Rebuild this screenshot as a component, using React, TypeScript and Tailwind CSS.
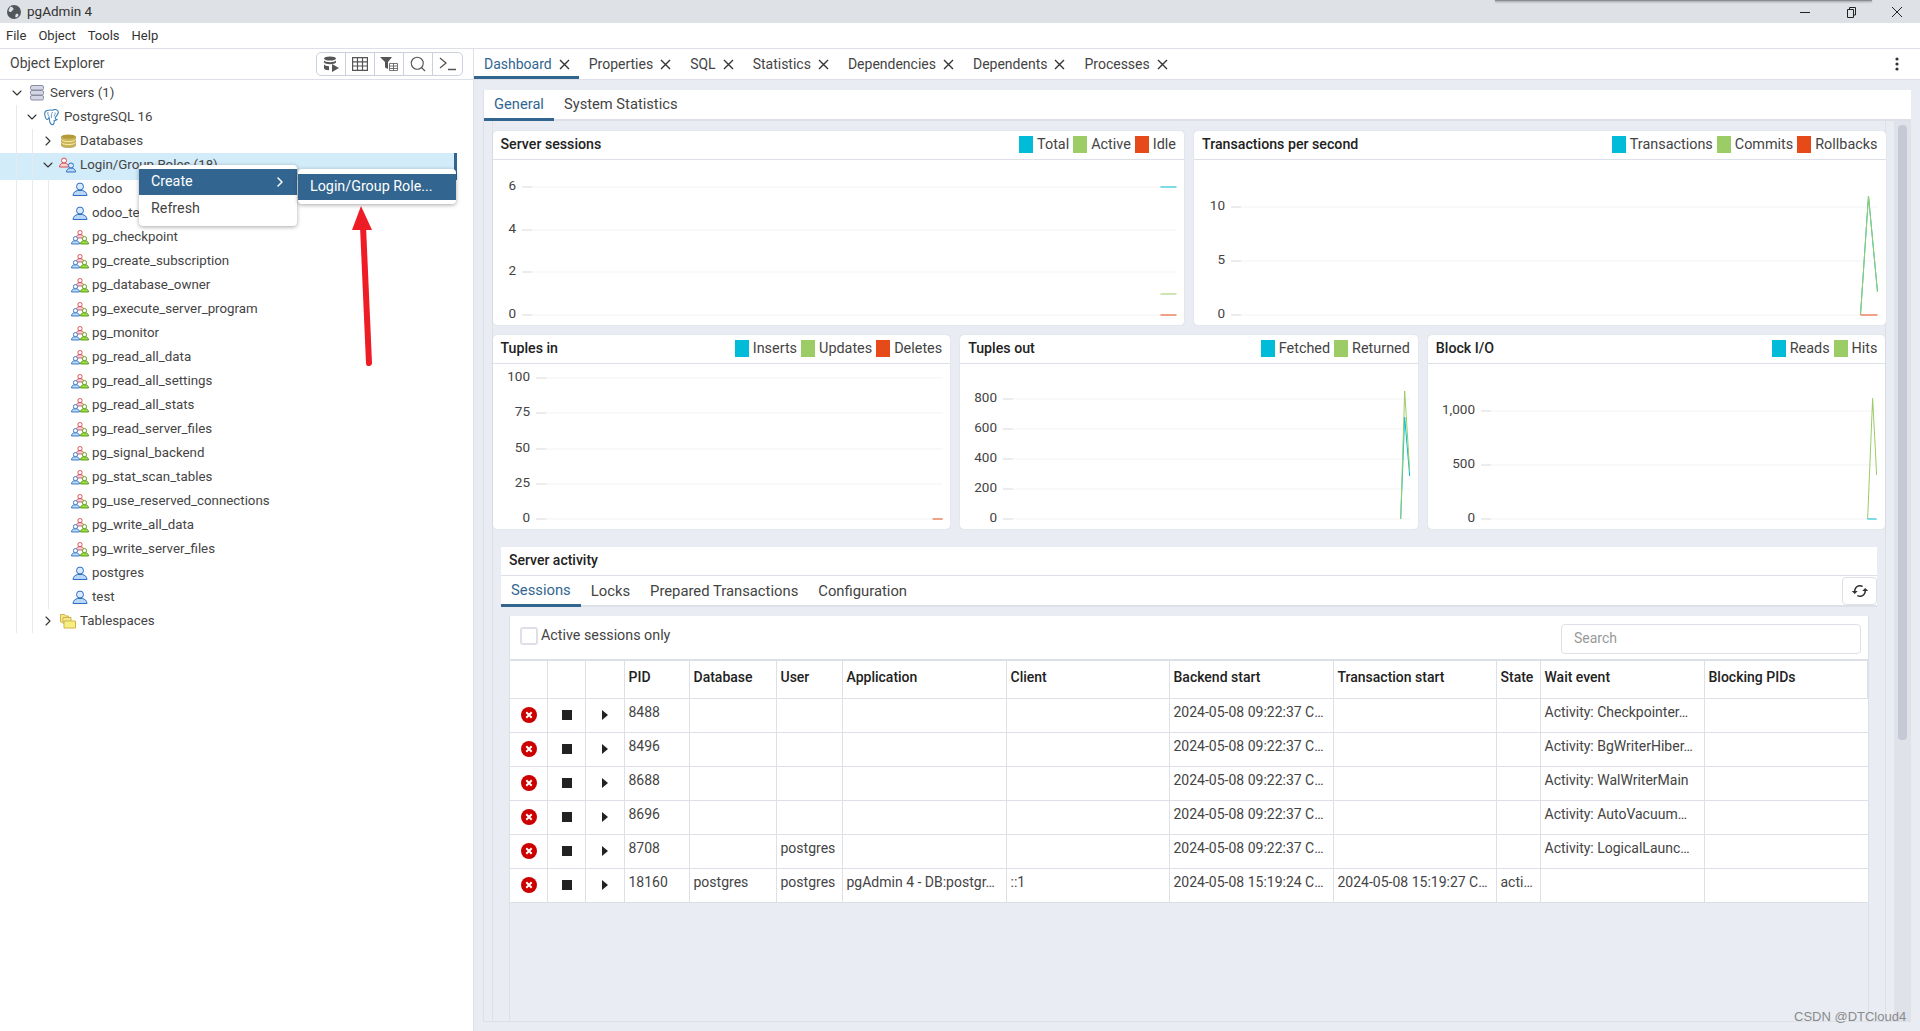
import { ChevronDown, ChevronRight, Search } from 'lucide-react';
import { MdCached } from 'react-icons/md';

const TEAL = '#00bcd8';
const GREEN = '#9ccc65';
const RED = '#e64a19';

const UserIcon = () => (
  <svg width="16" height="16" viewBox="0 0 16 16">
    <path d="M1 14.5c0-3 2.5-4.5 4.5-5h5c2 .5 4.500 2 4.500 5z" fill="#b9d7f5" stroke="#2b6fc4" strokeWidth="1" />
    <circle cx="8" cy="5.500" r="3.500" fill="#d8e9fa" stroke="#2b6fc4" strokeWidth="1" />
  </svg>
);

const Person = ({ x, y, fill, stroke }: { x: number; y: number; fill: string; stroke: string }) => (
  <g transform={`translate(${x} ${y})`}>
    <path d="M0 8c0-2 1.500-3 3-3.300h2c1.500.3 3 1.300 3 3.300z" fill={fill} stroke={stroke} strokeWidth="0.9" />
    <circle cx="4" cy="2.600" r="2.100" fill="#ffffff" stroke={stroke} strokeWidth="0.9" />
  </g>
);

const GroupIcon = () => (
  <svg width="18" height="16" viewBox="0 0 18 16">
    <Person x={5} y={1} fill="#f8d7d7" stroke="#d9474f" />
    <Person x={0.500} y={7} fill="#b9d7f5" stroke="#2b6fc4" />
    <Person x={9.500} y={7} fill="#a5d64c" stroke="#4e9a06" />
  </svg>
);

const LoginRolesIcon = () => (
  <svg width="18" height="16" viewBox="0 0 18 16">
    <g transform="translate(0 0)">
      <path d="M.500 10c0-2.500 1.800-3.500 3.500-4h2c1.700.5 3.500 1.500 3.500 4z" fill="#f8d7d7" stroke="#d9474f" />
      <circle cx="5" cy="3.500" r="2.500" fill="#fff" stroke="#d9474f" />
    </g>
    <g transform="translate(7 5)">
      <path d="M.500 10c0-2.500 1.800-3.500 3.500-4h2c1.700.5 3.500 1.500 3.500 4z" fill="#b9d7f5" stroke="#2b6fc4" />
      <circle cx="5" cy="3.500" r="2.500" fill="#d8e9fa" stroke="#2b6fc4" />
    </g>
  </svg>
);

const ServersIcon = () => (
  <svg width="14" height="16" viewBox="0 0 14 16">
    {[0.500, 5.500, 10.500].map((y) => (
      <rect key={y} x="0.500" y={y} width="13" height="4.500" rx="1.500" fill="#d5d6e4" stroke="#8b8ca3" />
    ))}
  </svg>
);

const ElephantIcon = () => (
  <svg width="17" height="17" viewBox="0 0 17 17">
    <path
      d="M3 1.500C1 2 .5 4 .8 6c.3 2 1 4 2.200 4.500 1 .3 1.500-1 2-2 .5 1.500.5 3.500 1 5 .5 1.500 2 2.500 3.200 2 1.200-.5 1-2.500 1-4 1.500 0 2.300-.3 2.800-1-1 0-1.800-.5-1.800-1.500 0-1 2.500-3 3-5 .4-2-1-3.500-3-3.500-1 0-2 .3-2.700.7C7.500 1 5 1 3 1.500z"
      fill="#ffffff"
      stroke="#3d7fb8"
      strokeWidth="1.100"
    />
    <path d="M4 3c-.5 1.500 0 3 1 4.500M8.500 3c-1 1.500-1.500 3.500-1 6M11 3.500c.5 1.500-.5 3-1 4" fill="none" stroke="#3d7fb8" strokeWidth="0.800" />
  </svg>
);

const DatabasesIcon = () => (
  <svg width="15" height="14" viewBox="0 0 15 14">
    <path d="M.500 2.500v9c0 1.100 3 2 7 2s7-.9 7-2v-9z" fill="#c9b458" stroke="#9a8a3c" strokeWidth="0.600" />
    <ellipse cx="7.500" cy="2.500" rx="7" ry="2" fill="#b59a3a" />
    <path d="M.500 5.500c0 1.100 3 2 7 2s7-.9 7-2M.500 8.500c0 1.100 3 2 7 2s7-.9 7-2" fill="none" stroke="#fff3b0" strokeWidth="1" />
  </svg>
);

const TablespacesIcon = () => (
  <svg width="16" height="16" viewBox="0 0 16 16">
    <path d="M.500 1.500h4l1 1.500h3v6h-8z" fill="#f5e98a" stroke="#d3b24a" />
    <path d="M3 4.500h8v6H3z" fill="#f5e98a" stroke="#d3b24a" />
    <path d="M4 8h11.500v7H4z" fill="#f5ee80" stroke="#d3b24a" />
  </svg>
);

type RowKind = 'user' | 'group';

const ROLES: [string, RowKind][] = [
  ['odoo', 'user'],
  ['odoo_test', 'user'],
  ['pg_checkpoint', 'group'],
  ['pg_create_subscription', 'group'],
  ['pg_database_owner', 'group'],
  ['pg_execute_server_program', 'group'],
  ['pg_monitor', 'group'],
  ['pg_read_all_data', 'group'],
  ['pg_read_all_settings', 'group'],
  ['pg_read_all_stats', 'group'],
  ['pg_read_server_files', 'group'],
  ['pg_signal_backend', 'group'],
  ['pg_stat_scan_tables', 'group'],
  ['pg_use_reserved_connections', 'group'],
  ['pg_write_all_data', 'group'],
  ['pg_write_server_files', 'group'],
  ['postgres', 'user'],
  ['test', 'user'],
];

const Guides = ({ depth }: { depth: number }) => (
  <>
    {Array.from({ length: depth }).map((_, i) => (
      <span key={i} className="w-[16px] h-full shrink-0 border-r border-[#e6e9ef]" />
    ))}
  </>
);

const Branch = ({
  depth,
  open,
  icon,
  label,
}: {
  depth: number;
  open: boolean;
  icon: React.ReactNode;
  label: string;
}) => (
  <div className="flex items-center h-[24px] pl-[1px]">
    <Guides depth={depth} />
    <span className={depth === 0 ? 'w-[8px] shrink-0' : 'w-[7px] shrink-0'} />
    {open ? (
      <ChevronDown size={16} strokeWidth={1.600} className="shrink-0 text-[#333]" />
    ) : (
      <ChevronRight size={16} strokeWidth={1.600} className="shrink-0 text-[#333]" />
    )}
    <span className="w-[20px] ml-[2px] shrink-0 flex items-center justify-center">{icon}</span>
    <span className={`text-[13.300px] text-[#444] ${depth === 0 ? 'ml-[3px]' : 'ml-[2px]'}`}>{label}</span>
  </div>
);

const RoleRow = ({ name, kind }: { name: string; kind: RowKind }) => (
  <div className="flex items-center h-[24px] pl-[1px]">
    <Guides depth={3} />
    <span className="w-[22px] shrink-0" />
    <span className="w-[18px] shrink-0 flex items-center justify-center">
      {kind === 'user' ? <UserIcon /> : <GroupIcon />}
    </span>
    <span className="ml-[3px] text-[13.300px] text-[#444]">{name}</span>
  </div>
);

const ToolButton = ({ children, last }: { children: React.ReactNode; last?: boolean }) => (
  <span className={`w-[29px] h-full flex items-center justify-center text-[#555] ${last ? '' : 'border-r border-[#c9d2dc]'}`}>
    {children}
  </span>
);

const ObjectExplorer = () => (
  <aside className="w-[473px] shrink-0 bg-white">
    <div className="h-[31px] border-b border-[#dde0e6] flex items-center justify-between pl-[10px] pr-[10px]">
      <span className="text-[#444] -mt-[2px]">Object Explorer</span>
      <div className="h-[24px] flex border border-[#c9d2dc] rounded-[5px]">
        <ToolButton>
          <svg width="16" height="16" viewBox="0 0 16 16" fill="#555">
            <ellipse cx="7" cy="2.500" rx="6" ry="2" />
            <path d="M1 4.500c1 1.300 3 1.700 6 1.700s5-.4 6-1.700v2c-1 1.300-3 1.700-6 1.700s-5-.4-6-1.700zM1 8.500c1 1.300 3 1.700 5 1.700v4c-3 0-5-.7-5-2zM9 8l7 4-7 4z" />
          </svg>
        </ToolButton>
        <ToolButton>
          <svg width="16" height="14" viewBox="0 0 16 14" fill="none" stroke="#555" strokeWidth="1.200">
            <path d="M.600.600h14.800v12.800H.600zM.600 4.800h14.800M.600 9h14.800M5.500.600v12.800M10.500.600v12.800" />
          </svg>
        </ToolButton>
        <ToolButton>
          <svg width="18" height="14" viewBox="0 0 18 14">
            <path d="M0 0h12L8 5v7l-3-1.500V5z" fill="#555" />
            <path d="M9.500 6.500h8v7h-8zM9.500 9h8M9.500 11.500h8M13.500 6.500v7" fill="#fff" stroke="#555" strokeWidth="0.800" />
          </svg>
        </ToolButton>
        <ToolButton>
          <Search size={18} strokeWidth={1.500} />
        </ToolButton>
        <ToolButton last>
          <svg width="18" height="14" viewBox="0 0 18 14" fill="none" stroke="#555" strokeWidth="1.300">
            <path d="M1 1l6 5-6 5M9 12.500h8" />
          </svg>
        </ToolButton>
      </div>
    </div>
    <div className="relative pt-[1px]">
      <Branch depth={0} open icon={<ServersIcon />} label="Servers (1)" />
      <Branch depth={1} open icon={<ElephantIcon />} label="PostgreSQL 16" />
      <Branch depth={2} open={false} icon={<DatabasesIcon />} label="Databases" />
      <div className="w-[457px] h-[27px] -mb-[3px] bg-[#d3ecfa] border-r-[3px] border-[#326690]">
        <Branch depth={2} open icon={<LoginRolesIcon />} label="Login/Group Roles (18)" />
      </div>
      {ROLES.map(([name, kind]) => (
        <RoleRow key={name} name={name} kind={kind} />
      ))}
      <Branch depth={2} open={false} icon={<TablespacesIcon />} label="Tablespaces" />

      {/* context menu */}
      <div className="absolute left-[139px] top-[85px] w-[158px] h-[61px] pt-[4px] bg-white rounded-[4px] shadow-[0_1px_4px_rgba(0,0,0,0.35)] text-[14.300px]">
        <div className="h-[26px] px-[12px] pb-[1px] bg-[#326690] text-white flex items-center justify-between">
          <span>Create</span>
          <ChevronRight size={16} strokeWidth={2.200} className="-mr-[3px]" />
        </div>
        <div className="h-[27px] px-[12px] flex items-center text-[#444]">Refresh</div>
      </div>
      <div className="absolute left-[298px] top-[89px] w-[158px] h-[35px] pt-[5px] bg-white rounded-[4px] shadow-[0_1px_4px_rgba(0,0,0,0.35)] text-[14.300px]">
        <div className="h-[26px] px-[12px] pb-[1px] bg-[#326690] text-white flex items-center">Login/Group Role...</div>
      </div>
    </div>
  </aside>
);

const CloseX = () => (
  <svg width="11" height="11" viewBox="0 0 11 11" fill="none" stroke="#333" strokeWidth="1.400" className="ml-[7px] mr-[9px]">
    <path d="M1 1l9 9M10 1l-9 9" />
  </svg>
);

const TABS = ['Dashboard', 'Properties', 'SQL', 'Statistics', 'Dependencies', 'Dependents', 'Processes'];

const MainTabs = () => (
  <div className="h-[31px] bg-white border-b border-[#dde0e6] flex justify-between items-stretch shrink-0">
    <div className="flex">
      {TABS.map((t, i) => (
        <div
          key={t}
          className={`flex items-center pl-[10px] ${i === 0 ? 'text-[#326690] border-b-[3px] border-[#326690] pt-[3px]' : 'text-[#444]'}`}
        >
          {t}
          <CloseX />
        </div>
      ))}
    </div>
    <svg width="4" height="14" viewBox="0 0 4 14" fill="#333" className="self-center mr-[21px]">
      <circle cx="2" cy="2" r="1.600" />
      <circle cx="2" cy="7" r="1.600" />
      <circle cx="2" cy="12" r="1.600" />
    </svg>
  </div>
);

type Tick = { label: string; y: number };
type Series = { color: string; points: string };

// coordinates in the viewBox are page pixels, box = [x, y, w, h] of the card body
const Chart = ({
  box,
  ticks,
  tickX,
  gridEnd,
  series,
}: {
  box: [number, number, number, number];
  ticks: Tick[];
  tickX: number;
  gridEnd: number;
  series: Series[];
}) => (
  <svg width="100%" className="flex-1 min-h-0" viewBox={box.join(' ')} preserveAspectRatio="none">
    {ticks.map((t) => (
      <g key={t.label}>
        <line x1={tickX} x2={tickX + 10} y1={t.y} y2={t.y} stroke="#e6e6e6" strokeWidth="1.500" />
        <line x1={tickX + 10} x2={gridEnd} y1={t.y} y2={t.y} stroke="#f3f3f3" strokeWidth="1" />
        <text x={tickX - 6} y={t.y + 3} textAnchor="end" fontSize="13.500" fill="#444" fontFamily="Roboto, sans-serif">
          {t.label}
        </text>
      </g>
    ))}
    {series.map((s, i) => (
      <polyline key={i} points={s.points} fill="none" stroke={s.color} strokeWidth="1" />
    ))}
  </svg>
);

const ChartCard = ({
  title,
  legend,
  children,
}: {
  title: string;
  legend: [string, string][];
  children: React.ReactNode;
}) => (
  <div className="h-[194px] bg-white rounded-[4px] flex flex-col shadow-[0_0_1px_rgba(0,0,0,0.2)] min-w-0">
    <div className="h-[29px] shrink-0 border-b border-[#dde0e6] flex items-center justify-between pl-[8px] pr-[8px]">
      <span className="font-medium text-[14.200px] text-[#222] -mt-[1px]">{title}</span>
      <div className="flex items-center gap-[4px]">
        {legend.map(([label, color]) => (
          <div key={label} className="flex items-center gap-[4px]">
            <span className="w-[14px] h-[17px]" style={{ background: color }} />
            <span className="text-[14.400px] text-[#444] -mt-[1px]">{label}</span>
          </div>
        ))}
      </div>
    </div>
    {children}
  </div>
);

const Charts = () => (
  <>
    <div className="grid grid-cols-2 gap-[10px]">
      <ChartCard title="Server sessions" legend={[['Total', TEAL], ['Active', GREEN], ['Idle', RED]]}>
        <Chart
          box={[493, 160, 691, 165]}
          ticks={[{ label: '6', y: 187 }, { label: '4', y: 230 }, { label: '2', y: 272 }, { label: '0', y: 315 }]}
          tickX={522}
          gridEnd={1176}
          series={[
            { color: TEAL, points: '1160,187 1176,187' },
            { color: GREEN, points: '1160,294 1176,294' },
            { color: RED, points: '1160,315 1176,315' },
          ]}
        />
      </ChartCard>
      <ChartCard title="Transactions per second" legend={[['Transactions', TEAL], ['Commits', GREEN], ['Rollbacks', RED]]}>
        <Chart
          box={[1194, 160, 691, 165]}
          ticks={[{ label: '10', y: 207 }, { label: '5', y: 261 }, { label: '0', y: 315 }]}
          tickX={1231}
          gridEnd={1877}
          series={[
            { color: TEAL, points: '1860,315 1868,196 1877,292' },
            { color: GREEN, points: '1860,315 1868,196 1877,292' },
            { color: RED, points: '1860,315 1877,315' },
          ]}
        />
      </ChartCard>
    </div>
    <div className="grid grid-cols-3 gap-[10px] mt-[10px]">
      <ChartCard title="Tuples in" legend={[['Inserts', TEAL], ['Updates', GREEN], ['Deletes', RED]]}>
        <Chart
          box={[493, 364, 457, 165]}
          ticks={[{ label: '100', y: 378 }, { label: '75', y: 413 }, { label: '50', y: 449 }, { label: '25', y: 484 }, { label: '0', y: 519 }]}
          tickX={536}
          gridEnd={942}
          series={[{ color: RED, points: '932,519 942,519' }]}
        />
      </ChartCard>
      <ChartCard title="Tuples out" legend={[['Fetched', TEAL], ['Returned', GREEN]]}>
        <Chart
          box={[960, 364, 458, 165]}
          ticks={[{ label: '800', y: 399 }, { label: '600', y: 429 }, { label: '400', y: 459 }, { label: '200', y: 489 }, { label: '0', y: 519 }]}
          tickX={1003}
          gridEnd={1410}
          series={[
            { color: TEAL, points: '1401,519 1405,417 1410,476' },
            { color: GREEN, points: '1401,519 1405,391 1410,470' },
          ]}
        />
      </ChartCard>
      <ChartCard title="Block I/O" legend={[['Reads', TEAL], ['Hits', GREEN]]}>
        <Chart
          box={[1428, 364, 457, 165]}
          ticks={[{ label: '1,000', y: 411 }, { label: '500', y: 465 }, { label: '0', y: 519 }]}
          tickX={1481}
          gridEnd={1876}
          series={[
            { color: GREEN, points: '1867,519 1872,398 1876,475' },
            { color: TEAL, points: '1867,519 1876,519' },
          ]}
        />
      </ChartCard>
    </div>
  </>
);

const HEADERS = ['', '', '', 'PID', 'Database', 'User', 'Application', 'Client', 'Backend start', 'Transaction start', 'State', 'Wait event', 'Blocking PIDs'];

const SESSIONS = [
  ['8488', '', '', '', '', '2024-05-08 09:22:37 C…', '', '', 'Activity: Checkpointer…'],
  ['8496', '', '', '', '', '2024-05-08 09:22:37 C…', '', '', 'Activity: BgWriterHiber…'],
  ['8688', '', '', '', '', '2024-05-08 09:22:37 C…', '', '', 'Activity: WalWriterMain'],
  ['8696', '', '', '', '', '2024-05-08 09:22:37 C…', '', '', 'Activity: AutoVacuum…'],
  ['8708', '', 'postgres', '', '', '2024-05-08 09:22:37 C…', '', '', 'Activity: LogicalLaunc…'],
  ['18160', 'postgres', 'postgres', 'pgAdmin 4 - DB:postgr…', '::1', '2024-05-08 15:19:24 C…', '2024-05-08 15:19:27 C…', 'acti…', ''],
];

const GRID = 'grid grid-cols-[38px_38px_39px_65px_87px_66px_164px_163px_164px_163px_44px_164px_163px]';

const ActionCell = ({ children }: { children: React.ReactNode }) => (
  <div className="border-r border-b border-[#dde0e6] flex items-center justify-center pb-[1px]">{children}</div>
);

const SessionsTable = () => (
  <div className="bg-white border-t-2 border-[#dde0e6] w-[1358px]">
    <div className={`${GRID} h-[38px]`}>
      {HEADERS.map((h, i) => (
        <div key={i} className="border-r border-b border-[#dde0e6] pl-[3.500px] pt-[6px] font-medium text-[#222] whitespace-nowrap">
          {h}
        </div>
      ))}
    </div>
    {SESSIONS.map((row) => (
      <div key={row[0]} className={`${GRID} h-[34px]`}>
        <ActionCell>
          <svg width="16" height="16" viewBox="0 0 16 16">
            <circle cx="8" cy="8" r="8" fill="#cc0000" />
            <path d="M5.300 5.300l5.400 5.400M10.700 5.300l-5.400 5.400" stroke="#fff" strokeWidth="2" />
          </svg>
        </ActionCell>
        <ActionCell>
          <span className="w-[10px] h-[10px] bg-[#222]" />
        </ActionCell>
        <ActionCell>
          <svg width="6" height="10" viewBox="0 0 6 10" fill="#222">
            <path d="M0 0l6 5-6 5z" />
          </svg>
        </ActionCell>
        {row.map((c, i) => (
          <div key={i} className="border-r border-b border-[#dde0e6] pl-[3.500px] pt-[3px] text-[#444] whitespace-nowrap">
            {c}
          </div>
        ))}
        <div className="border-b border-[#dde0e6]" />
      </div>
    ))}
  </div>
);

const ServerActivity = () => (
  <div className="mt-[18px] mx-[8px] flex-1 flex flex-col min-h-0">
    <div className="bg-white h-[29px] shrink-0 border-b border-[#dde0e6] pl-[8px] pb-[1px] flex items-center font-medium text-[#222]">Server activity</div>
    <div className="bg-white h-[31px] shrink-0 border-b-2 border-[#dde0e6] flex justify-between">
      <div className="flex text-[14.800px]">
        {['Sessions', 'Locks', 'Prepared Transactions', 'Configuration'].map((t, i) => (
          <div
            key={t}
            className={`px-[10px] flex items-center -mb-[2px] ${i === 0 ? 'text-[#326690] border-b-[3px] border-[#326690]' : 'text-[#444]'}`}
          >
            {t}
          </div>
        ))}
      </div>
      <span className="w-[35px] h-[28px] mt-[1px] border border-[#dde0e6] rounded-[4px] flex items-center justify-center text-[#333]">
        <MdCached size={18} />
      </span>
    </div>
    <div className="mt-[9px] mx-[8px] flex-1 flex flex-col border-x border-[#dde0e6] min-h-0">
      <div className="bg-white h-[43px] shrink-0 flex items-center justify-between pl-[10px] pr-[7px]">
        <label className="flex items-center gap-[3px] text-[14.300px] text-[#444] -mt-[4px]">
          <span className="w-[18px] h-[18px] border-2 border-[#dde0e6] rounded-[3px]" />
          Active sessions only
        </label>
        <div className="w-[300px] h-[30px] border border-[#dde0e6] rounded-[4px] pl-[12px] flex items-center text-[#999] mt-[2px]">Search</div>
      </div>
      <SessionsTable />
    </div>
  </div>
);

const Dashboard = () => (
  <div className="flex-1 min-h-0 pl-[9px] pr-[9px] pt-[10px] pb-[9px] flex flex-col">
    <div className="flex-1 min-h-0 flex flex-col border-l border-b border-[#dde0e6]">
      <div className="h-[31px] shrink-0 bg-white border-b-2 border-[#dde0e6] flex text-[14.700px]">
        <div className="w-[70px] pl-[10px] flex items-center text-[#326690] border-b-[3px] border-[#326690] -mb-[2px]">General</div>
        <div className="pl-[10px] flex items-center text-[#444]">System Statistics</div>
      </div>
      <div className="flex-1 min-h-0 flex">
        <div className="w-[1394px] ml-[8px] pt-[10px] flex flex-col border-l border-r border-[#dde0e6] min-h-0">
          <div className="mx-[-0.5px]">
            <Charts />
          </div>
          <ServerActivity />
        </div>
        <div className="ml-[8px] flex-1 bg-[#dfe2e9] flex justify-center">
          <div className="w-[9px] h-[615px] mt-[4px] rounded-[4px] bg-[#c5c9d6]" />
        </div>
      </div>
    </div>
  </div>
);

export default function App() {
  return (
    <div className="relative w-[1920px] h-[1031px] overflow-hidden flex flex-col bg-white text-[14px] font-['Roboto',sans-serif] text-[#444]">
      <div className="relative h-[23px] shrink-0 bg-[#dee1e5] flex items-center justify-between pl-[7px]">
        <div className="flex items-center gap-[6px] text-[#333]">
          <svg width="14" height="14" viewBox="0 0 14 14">
            <circle cx="7" cy="7" r="7" fill="#50565c" />
            <path d="M3 2c1.500-.5 3 .5 3.500 2 .3 1-1.500 1.500-2 2.500C4 7.500 2 7 1.500 5.500M9 9c1-.5 2.500 0 2.500 1s-1.500 2.500-2.500 2.500-1-2.500 0-3.500z" fill="#dee1e5" />
          </svg>
          <span className="text-[13.500px]">pgAdmin 4</span>
        </div>
        <div className="flex items-center gap-[34px] pr-[17px]">
          <svg width="12" height="12" viewBox="0 0 12 12" stroke="#222" fill="none"><path d="M1 6.500h10" /></svg>
          <svg width="12" height="12" viewBox="0 0 12 12" stroke="#222" fill="none"><path d="M2.500 3.500h6v8h-6zM4.500 3.500v-2h6v7.500h-2" /></svg>
          <svg width="12" height="12" viewBox="0 0 12 12" stroke="#222" fill="none"><path d="M1 1l10 10M11 1L1 11" /></svg>
        </div>
        {/* edge of another window peeking over the title bar */}
        <div className="absolute left-[1495px] top-0 w-[377px] h-[1px] bg-[#8a8d92] shadow-[0_1px_2px_rgba(0,0,0,0.4)]" />
      </div>
      <div className="h-[26px] shrink-0 bg-white border-b border-[#dde0e6] flex items-center pl-[6px] gap-[12px] text-[13px] text-[#333]">
        <span>File</span>
        <span>Object</span>
        <span>Tools</span>
        <span>Help</span>
      </div>
      <div className="flex-1 min-h-0 flex">
        <ObjectExplorer />
        <main className="flex-1 min-w-0 flex flex-col bg-[#e9ecf2] border-l border-[#dde0e6]">
          <MainTabs />
          <Dashboard />
        </main>
      </div>
      {/* annotation arrow drawn on the screenshot */}
      <svg className="absolute left-0 top-0 pointer-events-none" width="400" height="380" viewBox="0 0 400 380">
        <path d="M369 363L363 226" stroke="#ee1c25" strokeWidth="6" strokeLinecap="round" fill="none" />
        <path d="M361 206L372 230L352 230z" fill="#ee1c25" />
      </svg>
      <span className="absolute left-[1794px] top-[1007px] text-[13px] text-[#8a8a8a] font-['Liberation_Sans',sans-serif]">CSDN @DTCloud4</span>
    </div>
  );
}
